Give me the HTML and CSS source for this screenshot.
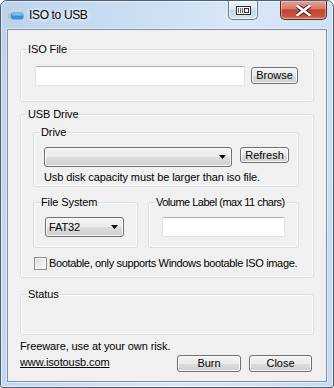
FILE: index.html
```html
<!DOCTYPE html>
<html lang="en">
<head>
  <meta charset="UTF-8">
  <meta name="viewport" content="width=device-width, initial-scale=1.0">
  <title>ISO to USB</title>
  <link rel="stylesheet" href="styles.css">
</head>
<body>
  <div class="window">
    <div class="titlebar">
      <svg class="app-icon" width="16" height="8" viewBox="0 0 16 8">
        <rect x="0" y="1.5" width="4" height="5" fill="#b9bec4"/>
        <rect x="3" y="0.5" width="12.5" height="7" rx="2" fill="#3b8fd4"/>
        <rect x="4" y="1" width="11" height="2.5" rx="1" fill="#7dbef0"/>
      </svg>
      <span class="title">ISO to USB</span>
      <div class="caption-buttons">
        <div class="cap-btn cap-max">
          <svg width="15" height="9" viewBox="0 0 15 9">
            <rect x="0.5" y="0.5" width="14" height="8" fill="#f4f4f4" stroke="#2d2d2d"/>
            <rect x="2" y="2" width="1" height="5" fill="#6b6b6b"/>
            <rect x="4" y="2" width="1" height="5" fill="#6b6b6b"/>
            <rect x="6" y="2" width="1" height="5" fill="#6b6b6b"/>
            <rect x="8.5" y="2.5" width="4" height="4" fill="#fff" stroke="#2d2d2d"/>
          </svg>
        </div>
        <div class="cap-btn cap-close">
          <svg width="15" height="11" viewBox="0 0 15 11">
            <path d="M1.5 1 L13.5 10 M13.5 1 L1.5 10" stroke="#3a1d1d" stroke-width="4.4" stroke-linecap="square"/>
            <path d="M1.5 1 L13.5 10 M13.5 1 L1.5 10" stroke="#ffffff" stroke-width="2.6" stroke-linecap="square"/>
          </svg>
        </div>
      </div>
    </div>

    <div class="client">
      <fieldset class="group group-iso">
        <legend>ISO File</legend>
        <div class="row">
          <input class="textbox iso-path" type="text">
          <button class="btn btn-browse">Browse</button>
        </div>
      </fieldset>

      <fieldset class="group group-usb">
        <legend>USB Drive</legend>
        <fieldset class="group group-drive">
          <legend>Drive</legend>
          <div class="row row-top">
            <div class="combo combo-drive">
              <span></span>
              <svg class="arrow" width="7" height="4" viewBox="0 0 7 4"><polygon points="0,0 7,0 3.5,4" fill="#000"/></svg>
            </div>
            <button class="btn btn-refresh">Refresh</button>
          </div>
          <p class="hint">Usb disk capacity must be larger than iso file.</p>
        </fieldset>

        <div class="row options">
          <fieldset class="group group-fs">
            <legend>File System</legend>
            <div class="combo combo-fs">
              <span>FAT32</span>
              <svg class="arrow" width="7" height="4" viewBox="0 0 7 4"><polygon points="0,0 7,0 3.5,4" fill="#000"/></svg>
            </div>
          </fieldset>
          <fieldset class="group group-label">
            <legend>Volume Label (max 11 chars)</legend>
            <input class="textbox volume-label" type="text">
          </fieldset>
        </div>

        <label class="check-row">
          <span class="checkbox"></span>
          <span class="check-text">Bootable, only supports Windows bootable ISO image.</span>
        </label>
      </fieldset>

      <fieldset class="group group-status">
        <legend>Status</legend>
      </fieldset>

      <p class="note">Freeware, use at your own risk.</p>

      <div class="footer">
        <a class="site-link" href="#">www.isotousb.com</a>
        <div class="footer-buttons">
          <button class="btn btn-burn">Burn</button>
          <button class="btn btn-close">Close</button>
        </div>
      </div>
    </div>
  </div>
</body>
</html>
```

FILE: styles.css
```css
html, body {
  margin: 0;
  padding: 0;
}
body {
  font-family: 'Liberation Sans', Arial, sans-serif;
  font-size: 11px;
  letter-spacing: -0.1px;
  color: #000;
  background: #fff;
}

/* controls */
.textbox {
  height: 20px;
  box-sizing: border-box;
  margin: 0;
  padding: 0 3px;
  border: 1px solid #e2e3ea;
  border-top-color: #abadb3;
  border-radius: 2px;
  background: #fff;
  font: inherit;
}
.btn, .combo {
  box-sizing: border-box;
  margin: 0;
  padding: 0;
  border: 1px solid #707070;
  border-radius: 3px;
  background: linear-gradient(#f2f2f2 0%, #ebebeb 50%, #dddddd 50%, #cfcfcf 100%);
  box-shadow: inset 0 0 0 1px #fbfbfb;
  font: inherit;
  color: #000;
  line-height: 13px;
}
.combo {
  height: 20px;
  display: flex;
  align-items: center;
  justify-content: space-between;
  padding: 0 5px 0 3px;
}

/* window frame */
.window {
  width: 334px;
  height: 388px;
  box-sizing: border-box;
  border: 1px solid #4f5f73;
  border-radius: 7px 7px 3px 3px;
  background: linear-gradient(100deg, #bcd3ec 0%, #cfe1f4 45%, #d9e8f7 60%, #c6dbf1 100%);
  box-shadow: inset 0 0 0 1px rgba(255, 255, 255, 0.55);
  display: flex;
  flex-direction: column;
  overflow: hidden;
}
.titlebar {
  height: 28px;
  display: flex;
  align-items: center;
  padding-left: 7px;
}
.app-icon {
  margin-top: 1px;
}
.title {
  margin-left: 5px;
  font-size: 12px;
  letter-spacing: -0.35px;
  text-shadow: 0 0 6px #fff, 0 0 3px #fff;
}
.caption-buttons {
  margin-left: auto;
  margin-right: 6px;
  align-self: flex-start;
  display: flex;
  gap: 22px;
}
.cap-btn {
  height: 19px;
  box-sizing: border-box;
  display: flex;
  align-items: center;
  justify-content: center;
  border: 1px solid #6c7d91;
  border-top: none;
  border-radius: 0 0 5px 5px;
}
.cap-max {
  width: 30px;
  background: linear-gradient(#eef4fb 0%, #dbe7f4 45%, #c4d6eb 50%, #d6e5f4 100%);
  box-shadow: inset 0 0 0 1px rgba(255, 255, 255, 0.6);
}
.cap-close {
  width: 47px;
  border-color: #5b2a24;
  background: linear-gradient(#e3a193 0%, #d57b69 42%, #c2432d 50%, #c9553f 85%, #dc7a5f 100%);
  box-shadow: inset 0 0 0 1px rgba(255, 210, 200, 0.5);
}

/* client area */
.client {
  flex: 1;
  margin: 0 6px 5px 6px;
  border: 1px solid #7f91a7;
  background: #f0f0f0;
  padding: 12px 0 0 12px;
  box-shadow: 0 0 0 1px rgba(255, 255, 255, 0.45);
}
.group {
  margin: 0;
  min-width: 0;
  border: 1px solid #d5dfe5;
  border-radius: 3px;
  box-shadow: inset 0 0 0 1px rgba(255, 255, 255, 0.7);
}
.group legend {
  padding: 0 1px;
  line-height: 14px;
  white-space: nowrap;
}
.row {
  display: flex;
  align-items: center;
}
.row-top {
  align-items: flex-start;
}

.group-iso {
  width: 294px;
  box-sizing: border-box;
  padding: 10px 14px 15px 14px;
}
.group-iso legend {
  margin-left: -8px;
}
.iso-path {
  width: 210px;
}
.btn-browse {
  margin-left: 6px;
  align-self: flex-start;
  margin-top: 1px;
  width: 47px;
  height: 17px;
}

.group-usb {
  width: 294px;
  box-sizing: border-box;
  margin-top: 5px;
  padding: 4px 0 7px 12px;
}
.group-usb > legend {
  margin-left: -6px;
}
.group-drive {
  width: 266px;
  box-sizing: border-box;
  padding: 8px 0 2px 10px;
}
.group-drive legend {
  margin-left: -4px;
}
.combo-drive {
  width: 188px;
}
.btn-refresh {
  margin-left: 8px;
  width: 49px;
  height: 16px;
}
.hint {
  margin: 3px 0 0 0;
  line-height: 14px;
}
.options {
  margin-top: 8px;
  align-items: stretch;
}
.group-fs {
  width: 105px;
  box-sizing: border-box;
  padding: 8px 0 10px 11px;
}
.group-fs legend {
  margin-left: -5px;
}
.combo-fs {
  width: 79px;
}
.group-label {
  width: 151px;
  box-sizing: border-box;
  margin-left: 10px;
  padding: 8px 0 10px 13px;
}
.group-label legend {
  margin-left: -7px;
  letter-spacing: -0.5px;
}
.volume-label {
  width: 123px;
}
.check-row {
  display: flex;
  align-items: center;
  margin-top: 8px;
  line-height: 14px;
  white-space: nowrap;
}
.check-text {
  letter-spacing: -0.35px;
}
.checkbox {
  width: 13px;
  height: 13px;
  box-sizing: border-box;
  margin: 0 2px 0 1px;
  border: 1px solid #8e8f8f;
  background: linear-gradient(135deg, #d6d6d6 0%, #f2f2f2 70%, #ffffff 100%);
  box-shadow: inset 0 0 0 1px #f4f4f4;
}

.group-status {
  width: 294px;
  box-sizing: border-box;
  margin-top: 9px;
  padding: 0 0 33px 0;
}
.group-status legend {
  margin-left: 6px;
}
.note {
  margin: 4px 0 0 0;
  line-height: 14px;
}
.footer {
  width: 294px;
  margin-top: 2px;
  display: flex;
  align-items: flex-start;
  padding-right: 2px;
  box-sizing: border-box;
}
.site-link {
  color: #000;
  line-height: 14px;
}
.footer-buttons {
  margin-left: auto;
  display: flex;
  gap: 8px;
}
.btn-burn {
  width: 64px;
  height: 17px;
}
.btn-close {
  width: 63px;
  height: 17px;
}
```
